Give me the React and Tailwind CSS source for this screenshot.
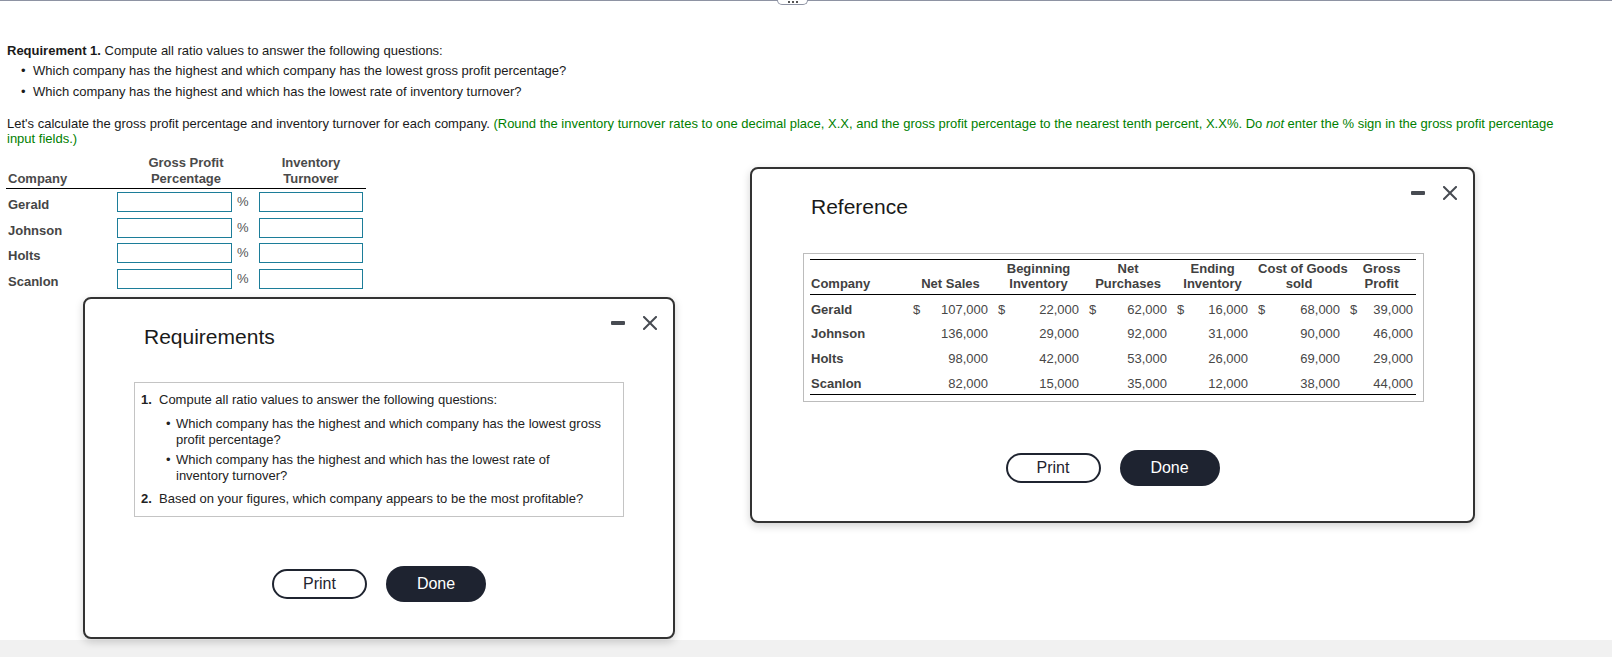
import React from 'react';

const refRows = [
  ['Gerald', '107,000', '22,000', '62,000', '16,000', '68,000', '39,000'],
  ['Johnson', '136,000', '29,000', '92,000', '31,000', '90,000', '46,000'],
  ['Holts', '98,000', '42,000', '53,000', '26,000', '69,000', '29,000'],
  ['Scanlon', '82,000', '15,000', '35,000', '12,000', '38,000', '44,000'],
];

const refHeads = [
  ['', 'Net Sales'],
  ['Beginning', 'Inventory'],
  ['Net', 'Purchases'],
  ['Ending', 'Inventory'],
  ['Cost of Goods', 'sold'],
  ['Gross', 'Profit'],
];

const companies = ['Gerald', 'Johnson', 'Holts', 'Scanlon'];

function WindowControls() {
  return (
    <div className="absolute top-[17px] right-[16px] flex items-center gap-[18px]">
      <div className="w-[14px] h-[4px] rounded-[1px] bg-[#474b52]" />
      <svg width="14" height="14" viewBox="0 0 14 14" className="block">
        <path d="M1 1L13 13M13 1L1 13" stroke="#474b52" strokeWidth="2" strokeLinecap="square" />
      </svg>
    </div>
  );
}

function Buttons() {
  return (
    <div className="flex justify-center items-center gap-[19px]">
      <button className="w-[95px] h-[30px] rounded-full border-2 border-[#1f2430] bg-white text-[16px] text-[#1f2430]">
        Print
      </button>
      <button className="w-[100px] h-[36px] rounded-full bg-[#1e2330] text-[16px] text-white">
        Done
      </button>
    </div>
  );
}

function Dialog({ title, className, children }) {
  return (
    <div
      className={`absolute bg-white border-2 border-[#333] rounded-[8px] shadow-[0_3px_8px_rgba(0,0,0,0.18)] pt-[26px] pb-[35px] ${className}`}>
      <WindowControls />
      <div className="pl-[59px] text-[21px] leading-[24px] text-[#1a1a1a]">{title}</div>
      {children}
      <Buttons />
    </div>
  );
}

function InputBox({ w }) {
  return <div className={`h-[20px] border border-[#1c7d99] bg-white ${w}`} />;
}

function RatioTable() {
  return (
    <div className="mt-[9px] ml-[-1px] w-[360px] text-[13px]">
      <div className="grid grid-cols-[111px_142px_107px] h-[34px] border-b border-black font-bold text-[#4a4a4a] leading-[16px] items-end pb-[2px]">
        <div className="pl-[2px]">Company</div>
        <div className="text-center pr-[4px]">Gross Profit<br />Percentage</div>
        <div className="text-center pr-[3px]">Inventory<br />Turnover</div>
      </div>
      {companies.map((c) =>
      <div key={c} className="grid grid-cols-[111px_142px_107px] h-[25.5px] pt-[3px] items-start">
          <div className="pl-[2px] font-bold text-[#454545] leading-[20px] pt-[3px]">{c}</div>
          <div className="flex items-center">
            <InputBox w="w-[115px]" />
            <span className="ml-[5px] text-[#555] leading-[20px]">%</span>
          </div>
          <div>
            <InputBox w="w-[104px]" />
          </div>
        </div>
      )}
    </div>
  );
}

function ReferenceTable() {
  const valueW = ['w-[75px]', 'w-[81px]', 'w-[78px]', 'w-[71px]', 'w-[82px]', 'w-[56px]'];
  return (
    <div className="ml-[51px] w-[621px] border border-[#bcbcbc] pt-[5px] pb-[6px] pl-[6px]">
      <table className="border-collapse table-fixed w-[606px] text-[13px] text-[#474747]">
        <colgroup>
          <col className="w-[103px]" />
          {valueW.map((w, i) =>
          <React.Fragment key={i}>
              <col className="w-[10px]" />
              <col className={w} />
            </React.Fragment>
          )}
        </colgroup>
        <thead>
          <tr className="h-[35px] border-t border-b border-black font-bold text-[#414141] leading-[15px]">
            <th className="text-left align-bottom pb-[3px] font-bold pl-[1px]">Company</th>
            {refHeads.map((h, i) =>
            <th
              key={i}
              colSpan={2}
              className={`text-center align-bottom pb-[3px] font-bold whitespace-nowrap ${i === 5 ? 'pr-[3px]' : 'pr-[10px]'}`}>
                {h[0] && <div>{h[0]}</div>}
                <div>{h[1]}</div>
              </th>
            )}
          </tr>
        </thead>
        <tbody className="border-b border-black">
          {refRows.map((r, ri) =>
          <tr key={r[0]} className="h-[25px]">
              <td className="font-bold text-[#414141] pl-[1px] pt-[4px]">{r[0]}</td>
              {r.slice(1).map((v, i) =>
            <React.Fragment key={i}>
                  <td className="text-left pt-[4px]">{ri === 0 ? '$' : ''}</td>
                  <td className={`text-right pt-[4px] ${i === 5 ? 'pr-[3px]' : 'pr-[10px]'}`}>{v}</td>
                </React.Fragment>
            )}
            </tr>
          )}
        </tbody>
      </table>
    </div>
  );
}

export default function App() {
  return (
    <div className="relative w-full h-[657px] overflow-hidden bg-white flex flex-col font-['Liberation_Sans',Arial,sans-serif]">
      {/* top edge with drag tab */}
      <div className="relative h-px bg-[#8e93a3] shrink-0">
        <div className="absolute left-[777px] top-0 w-[31px] h-[5px] bg-white border border-t-0 border-[#8e93a3] rounded-b-[5px] flex justify-center gap-[2px] pt-[1px]">
          <span className="w-[2px] h-[2px] bg-[#555]" />
          <span className="w-[2px] h-[2px] bg-[#555]" />
          <span className="w-[2px] h-[2px] bg-[#555]" />
        </div>
      </div>

      <div className="flex-1 pl-[7px] pr-[40px] pt-[40px] text-[13px] text-[#1a1a1a]">
        <p className="leading-[19px]">
          <b>Requirement 1.</b> Compute all ratio values to answer the following questions:
        </p>
        <ul className="leading-[21px]">
          <li className="flex">
            <span className="w-[26px] pl-[14px]">•</span>
            Which company has the highest and which company has the lowest gross profit percentage?
          </li>
          <li className="flex">
            <span className="w-[26px] pl-[14px]">•</span>
            Which company has the highest and which has the lowest rate of inventory turnover?
          </li>
        </ul>
        <p className="mt-[14px] leading-[15px]">
          Let's calculate the gross profit percentage and inventory turnover for each company.{' '}
          <span className="text-[#008000]">
            (Round the inventory turnover rates to one decimal place, X.X, and the gross profit percentage to the
            nearest tenth percent, X.X%. Do <i>not</i> enter the % sign in the gross profit percentage input fields.)
          </span>
        </p>
        <RatioTable />
      </div>

      <div className="h-[17px] shrink-0 bg-[#f1f1f1]" />

      <Dialog title="Requirements" className="left-[83px] top-[297px] w-[592px]">
        <div className="mx-[49px] mt-[33px] mb-[49px] border border-[#c4c4c4] pt-[9px] pb-[9px] pl-[6px] pr-[19px] text-[13px] leading-[16px] text-[#222]">
          <div className="flex">
            <b className="w-[18px] shrink-0">1.</b>
            <div>
              <div>Compute all ratio values to answer the following questions:</div>
              <div className="flex mt-[8px] pl-[7px]">
                <span className="w-[10px] shrink-0">•</span>
                <span>Which company has the highest and which company has the lowest gross profit percentage?</span>
              </div>
              <div className="flex mt-[4px] pl-[7px]">
                <span className="w-[10px] shrink-0">•</span>
                <span>Which company has the highest and which has the lowest rate of inventory turnover?</span>
              </div>
            </div>
          </div>
          <div className="flex mt-[7px]">
            <b className="w-[18px] shrink-0">2.</b>
            <div>Based on your figures, which company appears to be the most profitable?</div>
          </div>
        </div>
      </Dialog>

      <Dialog title="Reference" className="left-[750px] top-[167px] w-[725px]">
        <div className="mt-[34px] mb-[48px]">
          <ReferenceTable />
        </div>
      </Dialog>
    </div>
  );
}
